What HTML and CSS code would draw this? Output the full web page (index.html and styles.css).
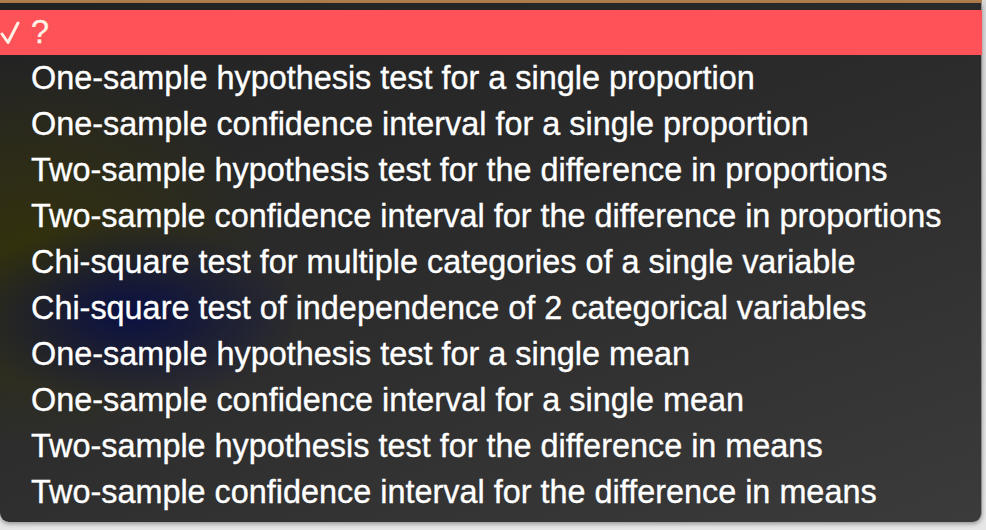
FILE: index.html
```html
<!DOCTYPE html>
<html lang="en">
<head>
    <meta charset="UTF-8">
    <title>Test picker</title>
    <link rel="stylesheet" href="styles.css">
</head>
<body>
    <div class="topbar"></div>
    <div class="menu">
        <div class="item selected">
            <svg class="check" width="20" height="24" viewBox="0 0 20 24">
                <path d="M2 13 L8 21.5 L18 2" fill="none" stroke="#fff2e4" stroke-width="3" stroke-linecap="round" stroke-linejoin="round"/>
            </svg>?
        </div>
        <div class="item">One-sample hypothesis test for a single proportion</div>
        <div class="item">One-sample confidence interval for a single proportion</div>
        <div class="item">Two-sample hypothesis test for the difference in proportions</div>
        <div class="item">Two-sample confidence interval for the difference in proportions</div>
        <div class="item">Chi-square test for multiple categories of a single variable</div>
        <div class="item">Chi-square test of independence of 2 categorical variables</div>
        <div class="item">One-sample hypothesis test for a single mean</div>
        <div class="item">One-sample confidence interval for a single mean</div>
        <div class="item">Two-sample hypothesis test for the difference in means</div>
        <div class="item">Two-sample confidence interval for the difference in means</div>
    </div>
</body>
</html>
```

FILE: styles.css
```css
* {
    margin: 0;
    padding: 0;
    box-sizing: border-box;
}

body {
    width: 986px;
    height: 530px;
    overflow: hidden;
    background: linear-gradient(180deg, #d8d8d8 0%, #e6e6e6 100%);
    font-family: 'Liberation Sans', Arial, sans-serif;
}

.topbar {
    height: 3px;
    background: #b07e4e;
    width: 982px;
}

.menu {
    width: 982px;
    height: 519px;
    padding-top: 7px;
    border-radius: 0 0 9px 9px;
    border-right: 1px solid #8c8c8c;
    background:
        radial-gradient(ellipse 170px 90px at 130px 310px, rgba(8, 14, 70, 0.95), rgba(8, 14, 70, 0) 100%),
        radial-gradient(ellipse 240px 190px at 30px 250px, rgba(52, 50, 8, 0.9), rgba(52, 50, 8, 0) 100%),
        linear-gradient(160deg, #222222 0%, #2b2b2b 45%, #3b3b3b 100%);
    box-shadow: 0 2px 4px rgba(0, 0, 0, 0.35);
}

.item {
    height: 46px;
    line-height: 46px;
    padding-left: 31px;
    font-size: 32.4px;
    color: #ffffff;
    -webkit-text-stroke: 0.35px #ffffff;
    white-space: nowrap;
}

.item.selected {
    position: relative;
    height: 45px;
    line-height: 45px;
    background: #fd5258;
    color: #fff2e4;
    -webkit-text-stroke: 0.35px #fff2e4;
    margin-right: -1px;
}

.check {
    position: absolute;
    left: 0;
    top: 11px;
}
```
